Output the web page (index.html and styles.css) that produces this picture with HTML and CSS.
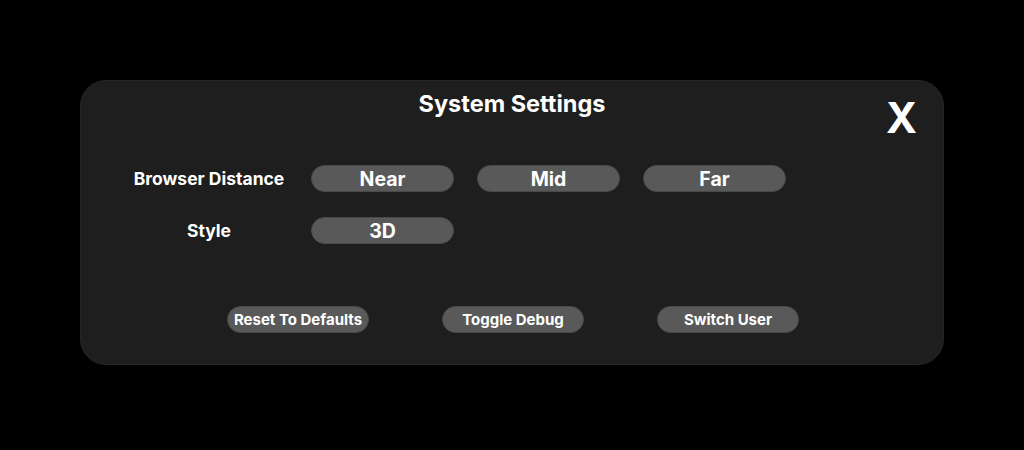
FILE: index.html
```html
<!DOCTYPE html>
<html>
<head>
<meta charset="utf-8">
<link rel="stylesheet" href="styles.css">
</head>
<body>
<div class="panel">
  <div class="title">System Settings</div>
  <div class="close">X</div>
  <div class="rows">
    <div class="row">
      <div class="label">Browser Distance</div>
      <div class="btn">Near</div>
      <div class="btn">Mid</div>
      <div class="btn">Far</div>
    </div>
    <div class="row">
      <div class="label">Style</div>
      <div class="btn">3D</div>
    </div>
  </div>
  <div class="actions">
    <div class="btn small">Reset To Defaults</div>
    <div class="btn small">Toggle Debug</div>
    <div class="btn small">Switch User</div>
  </div>
</div>
</body>
</html>
```

FILE: styles.css
```css
html, body {
  margin: 0;
  padding: 0;
  background: #000;
  width: 1024px;
  height: 450px;
  overflow: hidden;
  font-family: Inter, "Noto Sans", sans-serif;
  color: #fff;
}
.panel {
  position: relative;
  box-sizing: border-box;
  margin: 80px 0 0 80px;
  width: 864px;
  height: 285px;
  background: #1e1e1e;
  border: 1px solid #262626;
  border-radius: 26px;
  display: flex;
  flex-direction: column;
}
.title {
  text-align: center;
  font-weight: 700;
  font-size: 23.5px;
  line-height: 28px;
  margin-top: 9px;
}
.close {
  position: absolute;
  right: 26px;
  top: 16px;
  font-size: 42px;
  font-weight: 700;
  line-height: 42px;
}
.rows {
  display: flex;
  flex-direction: column;
  gap: 25px;
  margin-top: 47px;
  padding-left: 37px;
}
.row {
  display: flex;
  align-items: center;
  gap: 23px;
}
.label {
  width: 182px;
  margin-right: -12px;
  text-align: center;
  font-weight: 700;
  font-size: 17.5px;
}
.btn {
  box-sizing: border-box;
  width: 143px;
  height: 27px;
  border-radius: 14px;
  background: #595959;
  border: 1px solid #4a4a4a;
  display: flex;
  align-items: center;
  justify-content: center;
  font-weight: 700;
  font-size: 19.5px;
}
.actions {
  display: flex;
  justify-content: center;
  gap: 73px;
  margin-top: 62px;
  padding-left: 2px;
}
.btn.small {
  width: 142px;
  font-size: 15px;
}
```
